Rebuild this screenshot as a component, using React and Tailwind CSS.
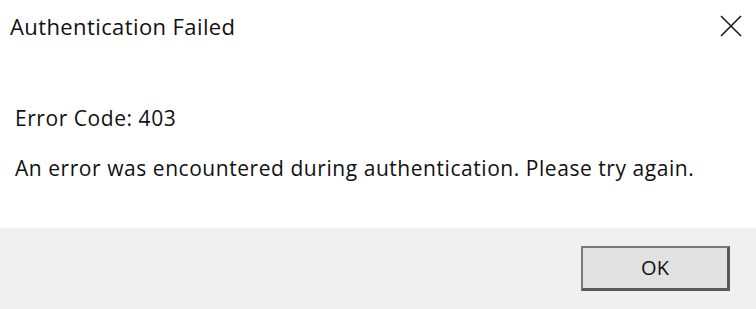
import React from "react";

export default function App() {
  return (
    <div className="w-[756px] h-[309px] flex flex-col bg-white text-black" style={{ fontFamily: '"Open Sans", "Noto Sans", sans-serif' }}>
      <div className="h-[228px] flex flex-col">
        <div className="flex items-start justify-between h-[54px]">
          <div className="pl-[10px] pt-[11px] text-[22px] leading-[30px] tracking-[0.4px] text-[#111111]">Authentication Failed</div>
          <div className="pr-[14px] pt-[15px]">
            <svg width="22" height="22" viewBox="0 0 22 22">
              <path d="M1 1 L21 21 M21 1 L1 21" stroke="#1a1a1a" strokeWidth="1.6" />
            </svg>
          </div>
        </div>
        <div className="pl-[15px] pt-[50px] flex flex-col gap-[22px] text-[21px] leading-[28px] tracking-[0.55px] text-[#111111]">
          <div>Error Code: 403</div>
          <div>An error was encountered during authentication. Please try again.</div>
        </div>
      </div>
      <div className="flex-1 bg-[#f0f0f0] flex justify-end items-start pt-[18px] pr-[26px]">
        <button className="w-[149px] h-[45px] bg-[#e1e1e1] border-2 border-[#7a7a7a] border-r-[3px] border-b-[3px] border-r-[#5a5a5a] border-b-[#5a5a5a] text-[20px] text-[#111111] flex items-center justify-center">
          OK
        </button>
      </div>
    </div>
  );
}
